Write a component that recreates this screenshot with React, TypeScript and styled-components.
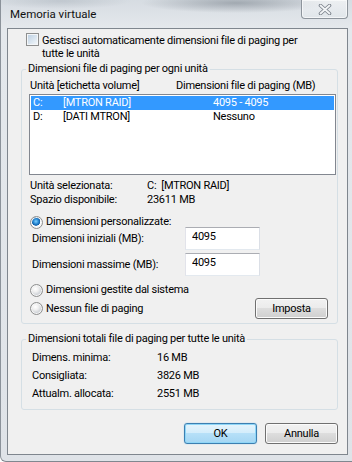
import React from 'react'
import styled, { createGlobalStyle } from 'styled-components'

const GlobalStyle = createGlobalStyle`
  html, body {
    margin: 0;
    padding: 0;
    background: #ffffff;
  }
  body {
    font-family: Roboto, "Noto Sans", "Liberation Sans", sans-serif;
    font-size: 11px;
    letter-spacing: -0.25px;
    color: #000000;
  }
`

const drives = [
  { letter: 'C:', label: '[MTRON RAID]', size: '4095 - 4095', selected: true },
  { letter: 'D:', label: '[DATI MTRON]', size: 'Nessuno', selected: false },
]

const totals = [
  { label: 'Dimens. minima:', value: '16 MB' },
  { label: 'Consigliata:', value: '3826 MB' },
  { label: 'Attualm. allocata:', value: '2551 MB' },
]

const CloseIcon = () => (
  <svg width="14" height="11" viewBox="0 0 14 11">
    <path d="M2.5 1.5 L11.5 9.5 M11.5 1.5 L2.5 9.5" stroke="#7c838c" strokeWidth="3.6" strokeLinecap="round" fill="none" />
    <path d="M2.5 1.5 L11.5 9.5 M11.5 1.5 L2.5 9.5" stroke="#f3f5f7" strokeWidth="1.8" strokeLinecap="round" fill="none" />
  </svg>
)

const App = () => {
  return (
    <>
      <GlobalStyle />
      <Frame>
        <TitleBar>
          <Title>Memoria virtuale</Title>
          <CloseButton>
            <CloseIcon />
          </CloseButton>
        </TitleBar>
        <Client>
          <CheckRow>
            <CheckBox />
            <CheckLabel>
              Gestisci automaticamente dimensioni file di paging per
              <br />
              tutte le unità
            </CheckLabel>
          </CheckRow>

          <Group $top={2} $pb={4}>
            <Legend>Dimensioni file di paging per ogni unità</Legend>
            <HeaderRow>
              <HeaderCell $w={146}>Unità [etichetta volume]</HeaderCell>
              <HeaderCell>Dimensioni file di paging (MB)</HeaderCell>
            </HeaderRow>
            <ListBox>
              {drives.map((d) => (
                <ListRow key={d.letter} $selected={d.selected}>
                  <Cell $w={30}>{d.letter}</Cell>
                  <Cell $w={150}>{d.label}</Cell>
                  <Cell>{d.size}</Cell>
                </ListRow>
              ))}
            </ListBox>
            <InfoRow $top={4}>
              <InfoLabel $w={117}>Unità selezionata:</InfoLabel>
              <InfoValue>C:  [MTRON RAID]</InfoValue>
            </InfoRow>
            <InfoRow $top={0}>
              <InfoLabel $w={117}>Spazio disponibile:</InfoLabel>
              <InfoValue>23611 MB</InfoValue>
            </InfoRow>

            <RadioRow $top={8}>
              <Radio $checked />
              <span>Dimensioni personalizzate:</span>
            </RadioRow>
            <FieldRow $top={-2}>
              <FieldLabel>Dimensioni iniziali (MB):</FieldLabel>
              <TextBox defaultValue="4095" />
            </FieldRow>
            <FieldRow $top={3}>
              <FieldLabel>Dimensioni massime (MB):</FieldLabel>
              <TextBox defaultValue="4095" />
            </FieldRow>
            <RadioRow $top={7}>
              <Radio />
              <span>Dimensioni gestite dal sistema</span>
            </RadioRow>
            <SetRow>
              <RadioRow $top={0}>
                <Radio />
                <span>Nessun file di paging</span>
              </RadioRow>
              <Button>Imposta</Button>
            </SetRow>
          </Group>

          <Group $top={8} $pb={6}>
            <Legend>Dimensioni totali file di paging per tutte le unità</Legend>
            <Totals>
              {totals.map((t) => (
                <TotalRow key={t.label}>
                  <InfoLabel $w={125}>{t.label}</InfoLabel>
                  <InfoValue>{t.value}</InfoValue>
                </TotalRow>
              ))}
            </Totals>
          </Group>

          <ButtonBar>
            <Button $default>OK</Button>
            <Button>Annulla</Button>
          </ButtonBar>
        </Client>
      </Frame>
    </>
  )
}

export default App

const Frame = styled.div`
  width: 352px;
  height: 462px;
  box-sizing: border-box;
  display: flex;
  flex-direction: column;
  padding: 0 4px 6px 6px;
  border-left: 1px solid #8b929a;
  border-bottom: 1px solid #80878f;
  border-bottom-left-radius: 6px;
  background:
    radial-gradient(ellipse 95px 10px at 235px 3px, rgba(95, 105, 115, 0.45), rgba(95, 105, 115, 0) 100%),
    radial-gradient(ellipse 70px 8px at 60px 1px, rgba(150, 160, 170, 0.35), rgba(150, 160, 170, 0) 100%),
    linear-gradient(180deg, #d6dce2 0px, #e4e8ec 28px, #dfe3e8 100%);
`

const TitleBar = styled.div`
  height: 28px;
  flex-shrink: 0;
  display: flex;
  justify-content: space-between;
  align-items: flex-start;
`

const Title = styled.div`
  padding: 7px 0 0 3px;
  line-height: 14px;
  font-size: 11.5px;
  letter-spacing: 0;
  color: #111111;
`

const CloseButton = styled.div`
  width: 47px;
  height: 19px;
  box-sizing: border-box;
  display: flex;
  align-items: center;
  justify-content: center;
  border: 1px solid #8d949c;
  border-top: 0;
  border-radius: 0 0 4px 4px;
  background: linear-gradient(180deg, rgba(255, 255, 255, 0.55), rgba(225, 230, 235, 0.6));
  box-shadow: inset 0 0 0 1px rgba(255, 255, 255, 0.6);
`

const Client = styled.div`
  flex: 1;
  display: flex;
  flex-direction: column;
  background: #f0f0f0;
  border: 1px solid #7f868e;
  padding: 4px 9px 0 13px;
`

const CheckRow = styled.div`
  display: flex;
  align-items: flex-start;
  gap: 3px;
  margin-left: 5px;
`

const CheckBox = styled.div`
  width: 13px;
  height: 13px;
  box-sizing: border-box;
  flex-shrink: 0;
  border: 1px solid #8e8f8f;
  background: linear-gradient(135deg, #b9cde0 0%, #dbe6f0 55%, #f6f9fb 100%);
  box-shadow: inset 0 0 0 1px #f4f6f8;
`

const CheckLabel = styled.div`
  margin-top: 1px;
  line-height: 13px;
`

const Group = styled.fieldset<{ $top: number; $pb: number }>`
  margin: ${(p) => p.$top}px 0 0;
  padding: 0 1px ${(p) => p.$pb}px 7px;
  border: 1px solid #d5dfe5;
  border-radius: 3px;
  min-width: 0;
`

const Legend = styled.legend`
  padding: 0 2px;
  margin-left: -3px;
  line-height: 14px;
`

const HeaderRow = styled.div`
  display: flex;
  margin-top: 3px;
  padding-left: 1px;
  line-height: 14px;
`

const HeaderCell = styled.div<{ $w?: number }>`
  width: ${(p) => (p.$w ? `${p.$w}px` : 'auto')};
  flex-shrink: 0;
`

const ListBox = styled.div`
  margin-top: 1px;
  height: 81px;
  box-sizing: border-box;
  padding: 1px;
  background: #ffffff;
  border: 1px solid #828790;
`

const ListRow = styled.div<{ $selected?: boolean }>`
  display: flex;
  height: 14px;
  line-height: 14px;
  padding-left: 2px;
  background: ${(p) => (p.$selected ? '#3399ff' : 'transparent')};
  color: ${(p) => (p.$selected ? '#ffffff' : '#000000')};
`

const Cell = styled.div<{ $w?: number }>`
  width: ${(p) => (p.$w ? `${p.$w}px` : 'auto')};
  flex-shrink: 0;
  white-space: nowrap;
`

const InfoRow = styled.div<{ $top: number }>`
  display: flex;
  margin-top: ${(p) => p.$top}px;
  padding-left: 1px;
  line-height: 14px;
`

const InfoLabel = styled.div<{ $w: number }>`
  width: ${(p) => p.$w}px;
  flex-shrink: 0;
`

const InfoValue = styled.div`
  white-space: pre;
`

const RadioRow = styled.div<{ $top: number }>`
  display: flex;
  align-items: center;
  gap: 3px;
  margin-top: ${(p) => p.$top}px;
  padding-left: 1px;
  line-height: 14px;
`

const Radio = styled.div<{ $checked?: boolean }>`
  width: 13px;
  height: 13px;
  box-sizing: border-box;
  flex-shrink: 0;
  border-radius: 50%;
  border: 1px solid #8e8f8f;
  background: ${(p) =>
    p.$checked
      ? 'radial-gradient(circle at 45% 40%, #7fd0ff 0px, #2a8ad4 2.5px, #0f5ea8 4px, #ffffff 4.6px, #f2f2f2 6px)'
      : 'radial-gradient(circle at 40% 35%, #ffffff 0px, #f0f0f0 3px, #cfd3d8 6px)'};
  box-shadow: inset 0 0 0 1px #f6f6f6;
`

const FieldRow = styled.div<{ $top: number }>`
  display: flex;
  align-items: center;
  margin-top: ${(p) => p.$top}px;
  padding-left: 3px;
  line-height: 14px;
`

const FieldLabel = styled.div`
  width: 153px;
  flex-shrink: 0;
`

const TextBox = styled.input`
  width: 75px;
  height: 23px;
  box-sizing: border-box;
  margin: 0;
  padding: 0 4px 4px 6px;
  font: inherit;
  letter-spacing: inherit;
  line-height: 14px;
  color: #000000;
  background: #ffffff;
  border: 1px solid;
  border-color: #abadb3 #dbdfe6 #e3e9ef #e2e3ea;
  border-radius: 0;
  outline: none;
`

const SetRow = styled.div`
  display: flex;
  align-items: center;
  justify-content: space-between;
  margin-top: 1px;
  padding-right: 8px;
`

const Button = styled.div<{ $default?: boolean }>`
  width: 73px;
  height: 21px;
  box-sizing: border-box;
  display: flex;
  align-items: center;
  justify-content: center;
  line-height: 14px;
  color: #000000;
  border-radius: 3px;
  border: 1px solid ${(p) => (p.$default ? '#3c7fb1' : '#707070')};
  background: ${(p) =>
    p.$default
      ? 'linear-gradient(180deg, #e5f4fc 0%, #d3edfb 48%, #b6e0f8 50%, #a4d6f3 100%)'
      : 'linear-gradient(180deg, #f2f2f2 0%, #ebebeb 48%, #dddddd 50%, #cfcfcf 100%)'};
  box-shadow: ${(p) =>
    p.$default ? 'inset 0 0 0 1px #8fd6f7, 0 0 1px #5fb3e6' : 'inset 0 0 0 1px #fbfbfb'};
`

const Totals = styled.div`
  margin-top: 3px;
  padding-left: 3px;
`

const TotalRow = styled.div`
  display: flex;
  line-height: 18px;
`

const ButtonBar = styled.div`
  display: flex;
  justify-content: flex-end;
  gap: 8px;
  margin-top: 13px;
`
